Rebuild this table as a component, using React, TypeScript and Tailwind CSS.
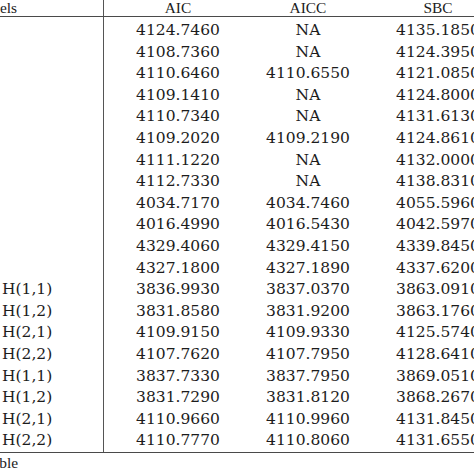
const rows: [string, string, string, string][] = [
  ["", "4124.7460", "NA", "4135.1850"],
  ["", "4108.7360", "NA", "4124.3950"],
  ["", "4110.6460", "4110.6550", "4121.0850"],
  ["", "4109.1410", "NA", "4124.8000"],
  ["", "4110.7340", "NA", "4131.6130"],
  ["", "4109.2020", "4109.2190", "4124.8610"],
  ["", "4111.1220", "NA", "4132.0000"],
  ["", "4112.7330", "NA", "4138.8310"],
  ["", "4034.7170", "4034.7460", "4055.5960"],
  ["", "4016.4990", "4016.5430", "4042.5970"],
  ["", "4329.4060", "4329.4150", "4339.8450"],
  ["", "4327.1800", "4327.1890", "4337.6200"],
  ["H(1,1)", "3836.9930", "3837.0370", "3863.0910"],
  ["H(1,2)", "3831.8580", "3831.9200", "3863.1760"],
  ["H(2,1)", "4109.9150", "4109.9330", "4125.5740"],
  ["H(2,2)", "4107.7620", "4107.7950", "4128.6410"],
  ["H(1,1)", "3837.7330", "3837.7950", "3869.0510"],
  ["H(1,2)", "3831.7290", "3831.8120", "3868.2670"],
  ["H(2,1)", "4110.9660", "4110.9960", "4131.8450"],
  ["H(2,2)", "4110.7770", "4110.8060", "4131.6550"],
];

const head = "font-['Liberation_Serif',serif] text-[15.4px] leading-[16px] text-[#1c1c1c]";
const cell = "font-['DejaVu_Serif',serif] text-[15.5px] leading-[21.6px] text-[#1c1c1c]";

export default function App() {
  return (
    <div className="w-[474px] h-[474px] overflow-hidden bg-white">
      <div className="ml-[-40px] w-[560px]">
        <div className="flex border-b border-[#4a4a4a]">
          <div className={`w-[144px] h-[16px] pr-[86px] text-right border-r border-[#555] ${head}`}>
            Models
          </div>
          <div className={`w-[148px] h-[16px] text-center ${head}`}>AIC</div>
          <div className={`w-[112px] h-[16px] text-center ${head}`}>AICC</div>
          <div className={`w-[148px] h-[16px] text-center ${head}`}>SBC</div>
        </div>
        <div className="flex border-b-[1.5px] border-[#4a4a4a]">
          <div className="w-[144px] pt-[3px] border-r border-[#555]">
            {rows.map((r, i) => (
              <div key={i} className={`h-[21.6px] pl-[42px] whitespace-nowrap ${cell}`}>
                {r[0]}
              </div>
            ))}
          </div>
          <div className="w-[148px] pt-[3px]">
            {rows.map((r, i) => (
              <div key={i} className={`h-[21.6px] text-center ${cell}`}>{r[1]}</div>
            ))}
          </div>
          <div className="w-[112px] pt-[3px]">
            {rows.map((r, i) => (
              <div key={i} className={`h-[21.6px] text-center ${cell}`}>{r[2]}</div>
            ))}
          </div>
          <div className="w-[148px] pt-[3px]">
            {rows.map((r, i) => (
              <div key={i} className={`h-[21.6px] text-center whitespace-nowrap ${cell}`}>{r[3]}</div>
            ))}
          </div>
        </div>
        <div className="w-[58px] flex justify-end pt-[1px]">
          <span className="whitespace-nowrap font-['Liberation_Serif',serif] text-[15.4px] leading-[18px] text-[#1c1c1c]">
            Table
          </span>
        </div>
      </div>
    </div>
  );
}
